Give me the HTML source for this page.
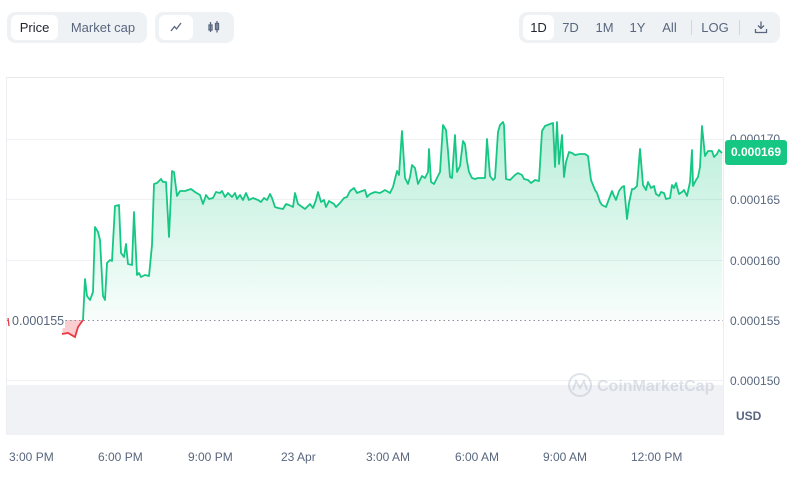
<!DOCTYPE html>
<html><head><meta charset="utf-8"><style>
body{margin:0;background:#fff;width:795px;height:477px;overflow:hidden;font-family:"Liberation Sans",sans-serif;position:relative}
.grp{position:absolute;top:12px;height:31px;background:#eff2f5;border-radius:8px}
.btn{position:absolute;top:3px;height:25px;line-height:25px;font-size:13px;color:#58667e;text-align:center;border-radius:6px}
.on{background:#fff;color:#222531}
.ax{position:absolute;font-size:12px;color:#58667e}
</style></head><body>
<div class="grp" style="left:7px;width:140px">
 <div class="btn on" style="left:4px;width:47px">Price</div>
 <div class="btn" style="left:56px;width:80px">Market cap</div>
</div>
<div class="grp" style="left:155px;width:79px">
 <div class="btn on" style="left:4px;width:34px"><svg width="14" height="14" viewBox="0 0 14 14" style="vertical-align:-2px"><path d="M2 11 L5.5 6.5 L7.5 9 L12 3" fill="none" stroke="#58667e" stroke-width="1.3"/></svg></div>
 <div class="btn" style="left:42px;width:33px"><svg width="14" height="14" viewBox="0 0 14 14" style="vertical-align:-2px"><g fill="none" stroke="#58667e" stroke-width="1.3"><rect x="2" y="5" width="3" height="5"/><line x1="3.5" y1="2" x2="3.5" y2="12"/><rect x="8.5" y="3.5" width="3" height="6"/><line x1="10" y1="1" x2="10" y2="12.5"/></g></svg></div>
</div>
<div class="grp" style="left:519px;width:261px">
 <div class="btn on" style="left:4px;width:31px">1D</div>
 <div class="btn" style="left:36px;width:31px">7D</div>
 <div class="btn" style="left:70px;width:31px">1M</div>
 <div class="btn" style="left:103px;width:31px">1Y</div>
 <div class="btn" style="left:135px;width:31px">All</div>
 <div style="position:absolute;left:172px;top:8px;width:1px;height:15px;background:#cfd6e4"></div>
 <div class="btn" style="left:178px;width:36px">LOG</div>
 <div style="position:absolute;left:220px;top:8px;width:1px;height:15px;background:#cfd6e4"></div>
 <div class="btn" style="left:226px;width:31px"><svg width="14" height="14" viewBox="0 0 14 14" style="vertical-align:-2px"><path d="M7 1.5V8.5M4 5.5L7 8.5L10 5.5M1.5 9V12.5H12.5V9" fill="none" stroke="#58667e" stroke-width="1.3"/></svg></div>
</div>
<svg width="795" height="477" style="position:absolute;left:0;top:0">
<defs><linearGradient id="g" x1="0" y1="0" x2="0" y2="1"><stop offset="0" stop-color="#16c784" stop-opacity="0.3"/><stop offset="1" stop-color="#16c784" stop-opacity="0.03"/></linearGradient></defs>
<line x1="6" y1="77.5" x2="723" y2="77.5" stroke="#e6e8ec"/>
<line x1="6.5" y1="77" x2="6.5" y2="435" stroke="#eceef1"/>
<line x1="723.5" y1="77" x2="723.5" y2="435" stroke="#eceef1"/>
<g stroke="#eff1f4"><line x1="7" y1="139.5" x2="723" y2="139.5"/><line x1="7" y1="199.5" x2="723" y2="199.5"/><line x1="7" y1="260.5" x2="723" y2="260.5"/><line x1="7" y1="380.5" x2="723" y2="380.5"/></g>
<rect x="7" y="385" width="716" height="50" fill="#f0f2f5"/>
<polygon points="83,320 85,279 87,296 90,300 93,292 95,227 98,232 100,240 103,296 105,300 107,263 110,260 112,261 115,206 119,205 121,253 124,257 126,244 128,264 132,265 134,212 137,275 139,273 141,277 145,275 149,276 152,245 154,184 157,183 161,179 163,182 166,182 169,237 172,171 174,172 177,196 180,191 185,191 191,189 195,192 200,195 203,204 206,195 209,199 213,198 216,192 220,193 222,191 225,197 228,193 232,197 235,193 237,199 240,195 243,200 246,193 249,200 253,198 258,200 261,202 264,198 267,200 270,194 272,198 275,207 278,208 283,209 286,204 289,205 293,207 295,193 298,204 305,209 310,204 313,208 316,200 318,192 321,202 324,200 326,207 329,201 334,204 336,207 340,203 344,198 347,197 350,191 354,188 357,193 362,191 365,190 367,197 370,194 375,192 380,193 385,190 390,193 393,187 397,171 399,175 402,131 405,178 408,184 410,177 412,165 415,168 418,184 422,176 425,178 428,172 429,149 431,182 434,184 437,178 440,172 443,125 446,130 448,151 450,177 452,178 455,135 457,172 460,166 463,141 465,144 467,161 469,172 472,178 475,179 478,178 482,178 485,178 487,139 490,176 493,180 495,178 498,132 500,125 503,122 504,125 506,179 510,180 515,175 518,173 522,175 524,179 528,180 531,183 535,180 539,181 542,131 545,126 550,124 553,123 555,167 557,122 559,164 562,135 564,177 566,162 569,152 572,153 575,155 580,154 585,154 588,156 591,180 595,190 597,193 600,202 602,205 606,207 609,199 612,191 614,196 616,200 619,191 622,187 624,186 627,219 629,203 632,189 634,189 637,186 640,149 643,185 646,190 648,182 651,188 654,186 656,194 659,196 661,192 664,193 666,199 670,198 672,185 674,188 676,183 679,194 682,192 684,190 687,196 690,182 692,150 693,186 696,180 698,177 700,167 702,126 705,156 708,151 712,151 714,157 717,154 719,150 722,153 722,320 83,320" fill="url(#g)"/>
<polygon points="64,320 82,320 78,327 75,337 68,333 62,334" fill="#ea3943" fill-opacity="0.25"/>
<line x1="7" y1="320.5" x2="723" y2="320.5" stroke="#8a919e" stroke-dasharray="1.5,3"/>
<polyline points="62,334 68,333 75,337 78,327 83,320" fill="none" stroke="#ea3943" stroke-width="1.8"/>
<polyline points="83,320 85,279 87,296 90,300 93,292 95,227 98,232 100,240 103,296 105,300 107,263 110,260 112,261 115,206 119,205 121,253 124,257 126,244 128,264 132,265 134,212 137,275 139,273 141,277 145,275 149,276 152,245 154,184 157,183 161,179 163,182 166,182 169,237 172,171 174,172 177,196 180,191 185,191 191,189 195,192 200,195 203,204 206,195 209,199 213,198 216,192 220,193 222,191 225,197 228,193 232,197 235,193 237,199 240,195 243,200 246,193 249,200 253,198 258,200 261,202 264,198 267,200 270,194 272,198 275,207 278,208 283,209 286,204 289,205 293,207 295,193 298,204 305,209 310,204 313,208 316,200 318,192 321,202 324,200 326,207 329,201 334,204 336,207 340,203 344,198 347,197 350,191 354,188 357,193 362,191 365,190 367,197 370,194 375,192 380,193 385,190 390,193 393,187 397,171 399,175 402,131 405,178 408,184 410,177 412,165 415,168 418,184 422,176 425,178 428,172 429,149 431,182 434,184 437,178 440,172 443,125 446,130 448,151 450,177 452,178 455,135 457,172 460,166 463,141 465,144 467,161 469,172 472,178 475,179 478,178 482,178 485,178 487,139 490,176 493,180 495,178 498,132 500,125 503,122 504,125 506,179 510,180 515,175 518,173 522,175 524,179 528,180 531,183 535,180 539,181 542,131 545,126 550,124 553,123 555,167 557,122 559,164 562,135 564,177 566,162 569,152 572,153 575,155 580,154 585,154 588,156 591,180 595,190 597,193 600,202 602,205 606,207 609,199 612,191 614,196 616,200 619,191 622,187 624,186 627,219 629,203 632,189 634,189 637,186 640,149 643,185 646,190 648,182 651,188 654,186 656,194 659,196 661,192 664,193 666,199 670,198 672,185 674,188 676,183 679,194 682,192 684,190 687,196 690,182 692,150 693,186 696,180 698,177 700,167 702,126 705,156 708,151 712,151 714,157 717,154 719,150 722,153" fill="none" stroke="#16c784" stroke-width="1.8" stroke-linejoin="round"/>
<line x1="8" y1="318" x2="9" y2="326" stroke="#ea3943" stroke-width="1.3"/>
<g opacity="0.35"><circle cx="580" cy="385" r="11" fill="none" stroke="#a6b0c3" stroke-width="2"/><path d="M573 390 L576 381 L580 388 L584 381 L587 390" fill="none" stroke="#a6b0c3" stroke-width="2"/>
<text x="597" y="391" font-size="16" font-weight="bold" fill="#a6b0c3" font-family="Liberation Sans">CoinMarketCap</text></g>
</svg>
<div class="ax" style="left:11px;top:314px;font-size:12.5px;color:#58667e;background:#fff;padding:0 1px">0.000155</div>
<div class="ax" style="left:730px;top:132px">0.000170</div>
<div style="position:absolute;left:725px;top:140px;width:62px;height:25px;background:#16c784;border-radius:3px;color:#fff;font-size:12px;font-weight:bold;line-height:25px;text-align:center">0.000169</div>
<div class="ax" style="left:730px;top:193px">0.000165</div>
<div class="ax" style="left:730px;top:254px">0.000160</div>
<div class="ax" style="left:730px;top:314px">0.000155</div>
<div class="ax" style="left:730px;top:374px">0.000150</div>
<div class="ax" style="left:736px;top:409px;font-weight:bold;font-size:12px">USD</div>
<div class="ax" style="left:9px;top:450px">3:00 PM</div>
<div class="ax" style="left:98px;top:450px">6:00 PM</div>
<div class="ax" style="left:188px;top:450px">9:00 PM</div>
<div class="ax" style="left:281px;top:450px">23 Apr</div>
<div class="ax" style="left:366px;top:450px">3:00 AM</div>
<div class="ax" style="left:455px;top:450px">6:00 AM</div>
<div class="ax" style="left:543px;top:450px">9:00 AM</div>
<div class="ax" style="left:631px;top:450px">12:00 PM</div>
</body></html>
